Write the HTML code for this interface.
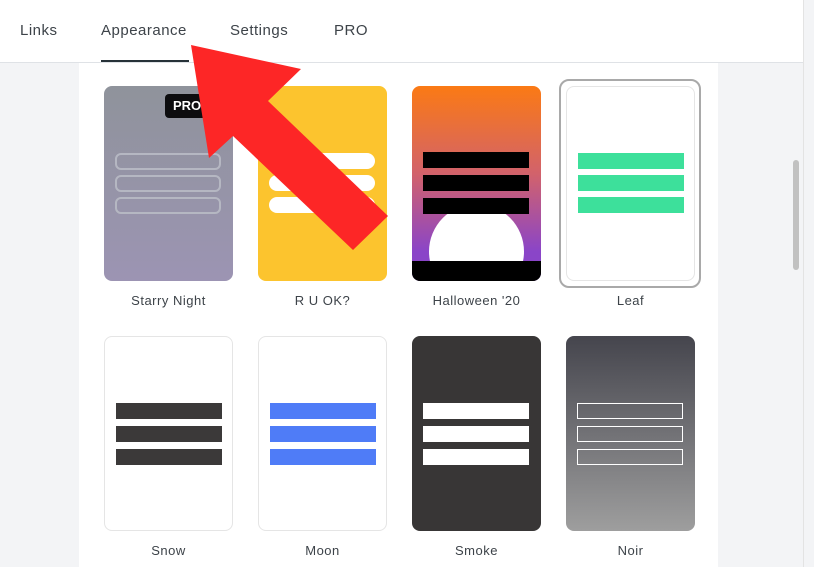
<!DOCTYPE html><html><head><style>
body{margin:0;width:814px;height:567px;overflow:hidden;background:#f3f4f6;font-family:"Liberation Sans",sans-serif;position:relative}
.hdr{position:absolute;left:0;top:0;width:803px;height:62px;background:#fff;border-bottom:1px solid #dfe2e6}
.tab{position:absolute;top:22px;font-size:15px;color:#3d4349;letter-spacing:.5px}
.panel{position:absolute;left:79px;top:63px;width:639px;height:504px;background:#fff}
.sb{position:absolute;left:803px;top:0;width:11px;height:567px;background:#f3f4f6;border-left:1px solid #e3e3e3}
.card{position:absolute;width:129px;height:195px;border-radius:8px;overflow:hidden}
.lbl{position:absolute;width:129px;text-align:center;font-size:13px;color:#3d4349;letter-spacing:.5px}
.bar{position:absolute;left:11px;width:106px;height:16px}
</style></head><body>
<div class="hdr">
<div class="tab" style="left:20px">Links</div>
<div class="tab" style="left:101px">Appearance</div>
<div class="tab" style="left:230px">Settings</div>
<div class="tab" style="left:334px">PRO</div>
<div style="position:absolute;left:101px;top:60px;width:88px;height:2px;background:#263238"></div>
</div>
<div class="sb"></div>
<div style="position:absolute;left:793px;top:160px;width:6px;height:110px;background:#c1c1c1;border-radius:3px"></div>
<div class="panel"></div>

<div class="card" style="left:104px;top:86px;background:linear-gradient(#8f939b,#9c94b3)">
<div style="position:absolute;left:61px;top:8px;width:44px;height:24px;background:#0d0d0f;border-radius:4px;color:#fff;font-weight:bold;font-size:13px;line-height:24px;padding-left:8px">PRO</div>
<div class="bar" style="top:67px;border:2px solid #b5b7c2;border-radius:6px;width:102px;height:13px"></div>
<div class="bar" style="top:89px;border:2px solid #b5b7c2;border-radius:6px;width:102px;height:13px"></div>
<div class="bar" style="top:111px;border:2px solid #b5b7c2;border-radius:6px;width:102px;height:13px"></div>
</div>
<div class="lbl" style="left:104px;top:293px">Starry Night</div>

<div class="card" style="left:258px;top:86px;background:#fcc42e">
<div class="bar" style="top:67px;background:#fff;border-radius:8px"></div>
<div class="bar" style="top:89px;background:#fff;border-radius:8px"></div>
<div class="bar" style="top:111px;background:#fff;border-radius:8px"></div>
</div>
<div class="lbl" style="left:258px;top:293px">R U OK?</div>

<div class="card" style="left:412px;top:86px;background:linear-gradient(#fb7a14,#d2626b 45%,#8a45c8 85%)">
<div style="position:absolute;left:17px;top:118px;width:95px;height:95px;border-radius:50%;background:#fff"></div>
<div style="position:absolute;left:0;top:175px;width:129px;height:20px;background:#000"></div>
<div class="bar" style="top:66px;background:#000"></div>
<div class="bar" style="top:89px;background:#000"></div>
<div class="bar" style="top:112px;background:#000"></div>
</div>
<div class="lbl" style="left:412px;top:293px">Halloween '20</div>

<div style="position:absolute;left:559px;top:79px;width:138px;height:205px;border:2px solid #a9a9a9;border-radius:10px"></div>
<div class="card" style="left:566px;top:86px;background:#fff;border:1px solid #e5e5e5;width:127px;height:193px">
<div class="bar" style="top:66px;background:#3de09b"></div>
<div class="bar" style="top:88px;background:#3de09b"></div>
<div class="bar" style="top:110px;background:#3de09b"></div>
</div>
<div class="lbl" style="left:566px;top:293px">Leaf</div>

<div class="card" style="left:104px;top:336px;background:#fff;border:1px solid #e5e5e5;width:127px;height:193px">
<div class="bar" style="top:66px;background:#3b3939"></div>
<div class="bar" style="top:89px;background:#3b3939"></div>
<div class="bar" style="top:112px;background:#3b3939"></div>
</div>
<div class="lbl" style="left:104px;top:543px">Snow</div>

<div class="card" style="left:258px;top:336px;background:#fff;border:1px solid #e5e5e5;width:127px;height:193px">
<div class="bar" style="top:66px;background:#4f7cf7"></div>
<div class="bar" style="top:89px;background:#4f7cf7"></div>
<div class="bar" style="top:112px;background:#4f7cf7"></div>
</div>
<div class="lbl" style="left:258px;top:543px">Moon</div>

<div class="card" style="left:412px;top:336px;background:#383636">
<div class="bar" style="top:67px;background:#fff"></div>
<div class="bar" style="top:90px;background:#fff"></div>
<div class="bar" style="top:113px;background:#fff"></div>
</div>
<div class="lbl" style="left:412px;top:543px">Smoke</div>

<div class="card" style="left:566px;top:336px;background:linear-gradient(#45454d,#9e9e9e)">
<div class="bar" style="top:67px;border:1px solid #fff;width:104px;height:14px"></div>
<div class="bar" style="top:90px;border:1px solid #fff;width:104px;height:14px"></div>
<div class="bar" style="top:113px;border:1px solid #fff;width:104px;height:14px"></div>
</div>
<div class="lbl" style="left:566px;top:543px">Noir</div>

<svg style="position:absolute;left:0;top:0" width="814" height="567"><polygon points="191,45 301,69 268,101 388,216 353,250 233,136 209,158" fill="#fd2626"/></svg>
</body></html>
